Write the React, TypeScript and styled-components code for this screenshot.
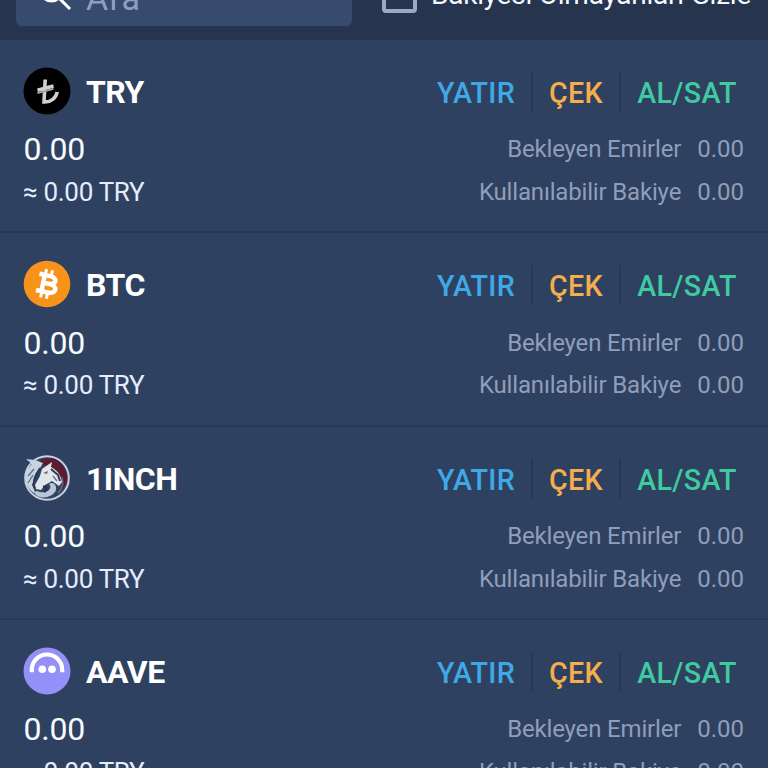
import styled, { createGlobalStyle } from 'styled-components'

const GlobalStyle = createGlobalStyle`
    * {
        box-sizing: border-box;
    }
    body {
        margin: 0;
        background: #2f4161;
        font-family: Roboto, 'Liberation Sans', sans-serif;
        color: #f6faff;
    }
`;

const Screen = styled.div`
    width: 768px;
    height: 768px;
    overflow: hidden;
    background: #2f4161;
`;

const Header = styled.header`
    display: flex;
    align-items: flex-end;
    height: 40px;
    padding: 0 16px 14px;
    overflow: hidden;
    background: #27344e;
`;

const Search = styled.div`
    display: flex;
    align-items: center;
    flex: none;
    width: 336px;
    height: 56px;
    padding-left: 23px;
    border-radius: 6px;
    background: #374b6f;
    color: #8f9fc0;
    font-size: 34px;
    letter-spacing: 1.2px;
    line-height: 54px;

    svg {
        margin: -8px 14px 0 0;
    }
`;

const Filter = styled.div`
    display: flex;
    align-items: center;
    flex: none;
    height: 36px;
    margin: 0 0 13px 30px;
    font-size: 28px;
    letter-spacing: -0.23px;
    line-height: 38px;
    white-space: nowrap;
`;

const CheckBox = styled.span`
    width: 35px;
    height: 36px;
    margin-right: 14px;
    border: 4px solid #9ca9c4;
    border-radius: 4px;
`;

const Row = styled.section`
    height: 193.4px;
    padding: 28px 24px 0;
    border-bottom: 2px solid #293853;
`;

const TopLine = styled.div`
    display: flex;
    align-items: center;
    height: 48px;
    margin-bottom: 12px;
    padding-right: 1px;

    svg {
        flex: none;
        margin: -2px 0 0 -1px;
    }
`;

const Symbol = styled.h2`
    flex: 1;
    margin: 0 0 0 15px;
    font-size: 32px;
    font-weight: 700;
    letter-spacing: -0.5px;
    line-height: 46px;
    color: #fff;
`;

const Action = styled.span<{ $color: string; $width: number }>`
    flex: none;
    width: ${p => p.$width}px;
    height: 40px;
    padding-left: 2px;
    font-size: 28.6px;
    font-weight: 500;
    letter-spacing: 0.3px;
    line-height: 43px;
    text-align: center;
    color: ${p => p.$color};

    & + & {
        padding-left: 0;
        border-left: 2px solid #293853;
    }

    &&&:last-child {
        padding-left: 10px;
    }
`;

const Line = styled.div`
    display: flex;
    align-items: center;
    justify-content: space-between;
    height: 42.5px;
`;

const Balance = styled.span`
    margin-left: -0.5px;
    font-size: 32px;
    letter-spacing: -0.2px;
`;

const Approx = styled.span`
    margin-left: -1px;
    font-size: 26px;
    letter-spacing: -0.3px;
    color: #e4edfd;
`;

const Detail = styled.span`
    display: flex;
    font-size: 24px;
    color: #8f9eb9;
`;

const Label = styled.span`
    margin-right: 16px;
    letter-spacing: -0.17px;
`;

const TryIcon = () => (
    <svg width="48" height="48" viewBox="0 0 48 48">
        <circle cx="24" cy="24" r="23.5" fill="#000" />
        <g fill="none" stroke="#d0d0d0">
            <path d="M22.2 12.5L21 35C28 35.5 33 31 34.2 25" strokeWidth="3.6" />
            <path d="M14.5 23.2L30.5 18.9" strokeWidth="3.6" />
            <path d="M14.5 26.2L30.5 21.9" strokeWidth="1.8" stroke="#a8a8a8" />
        </g>
    </svg>
)

const BtcIcon = () => (
    <svg width="48" height="48" viewBox="0 0 48 48">
        <circle cx="24" cy="24" r="23.3" fill="#f7931a" />
        <g transform="rotate(12 24 24)" fill="none" stroke="#fff">
            <path d="M14.5 15.6H25.5C33.5 15.6 33.5 23.5 25.5 23.5H20.5H26.5C35.5 23.5 35.5 32.2 26.5 32.2H14.5M20 15.6V32" strokeWidth="4.5" />
            <path d="M20.5 9.5V16M26.5 9.5V16M20.5 32V38.5M26.5 32V38.5" strokeWidth="3" />
        </g>
    </svg>
)

const InchIcon = () => (
    <svg width="48" height="48" viewBox="0 0 48 48">
        <circle cx="24" cy="24" r="21.8" fill="#34435e" stroke="#c8d1de" strokeWidth="2" />
        <path d="M18 6C30 0 42 8 44 22C45 29 41 34 38 36C40 27 37 19 29 14L16 9Z" fill="#5c1b30" />
        <path d="M3 5L12 6L20 9L17 14C9 21 8 32 13 40C4 36 0 25 4 16L9 10Z" fill="#c9d2df" />
        <path d="M29 8L28 13C34 16 38 21 39 28L36 32L29 27L22 31L18 36L13 35L12 31L17 22L19 15Z" fill="#e1e6ed" />
        <path d="M17 14L13 22L10 31L12 34M28 15L35 21L37 27" fill="none" stroke="#2b3953" strokeWidth="2" />
        <path d="M11 38C15 47 30 44 33 36C34 31 30 27 26 30C31 35 22 41 14 37Z" fill="#bac6d5" />
        <path d="M5 22L11 15M5 29L10 21M30 22L34 27M35 39C40 34 41 29 39 23" fill="none" stroke="#62718a" strokeWidth="1.3" />
        <path d="M20 19L25 17L24 20Z" fill="#76674f" />
        <path d="M20 33C24 32 25 35 21 38" fill="none" stroke="#26344f" strokeWidth="2.4" />
    </svg>
)

const AaveIcon = () => (
    <svg width="48" height="48" viewBox="0 0 48 48">
        <circle cx="24" cy="24" r="23.5" fill="#9391f7" />
        <path d="M8.8 25.3V22.7A15.2 15.2 0 0 1 39.2 22.7V25.3" fill="none" stroke="#fff" strokeWidth="4.2" />
        <circle cx="19.3" cy="22.3" r="3.8" fill="#fff" />
        <circle cx="29" cy="22.3" r="3.8" fill="#fff" />
    </svg>
)

const assets = [
    { symbol: 'TRY', Icon: TryIcon },
    { symbol: 'BTC', Icon: BtcIcon },
    { symbol: '1INCH', Icon: InchIcon },
    { symbol: 'AAVE', Icon: AaveIcon },
]

export default function App() {
    return (
        <Screen>
            <GlobalStyle />
            <Header>
                <Search>
                    <svg width="33" height="33" viewBox="0 0 33 33" fill="none" stroke="#fff" strokeWidth="3">
                        <circle cx="12.5" cy="12.5" r="10.5" />
                        <path d="M20 20L31 31" />
                    </svg>
                    Ara
                </Search>
                <Filter>
                    <CheckBox />
                    Bakiyesi Olmayanları Gizle
                </Filter>
            </Header>
            {assets.map(({ symbol, Icon }) => (
                <Row key={symbol}>
                    <TopLine>
                        <Icon />
                        <Symbol>{symbol}</Symbol>
                        <Action $color="#3fa9e6" $width={112}>YATIR</Action>
                        <Action $color="#f5ae4b" $width={88}>ÇEK</Action>
                        <Action $color="#3fcb9f" $width={124}>AL/SAT</Action>
                    </TopLine>
                    <Line>
                        <Balance>0.00</Balance>
                        <Detail><Label>Bekleyen Emirler</Label><span>0.00</span></Detail>
                    </Line>
                    <Line>
                        <Approx>≈ 0.00 TRY</Approx>
                        <Detail><Label>Kullanılabilir Bakiye</Label><span>0.00</span></Detail>
                    </Line>
                </Row>
            ))}
        </Screen>
    )
};
